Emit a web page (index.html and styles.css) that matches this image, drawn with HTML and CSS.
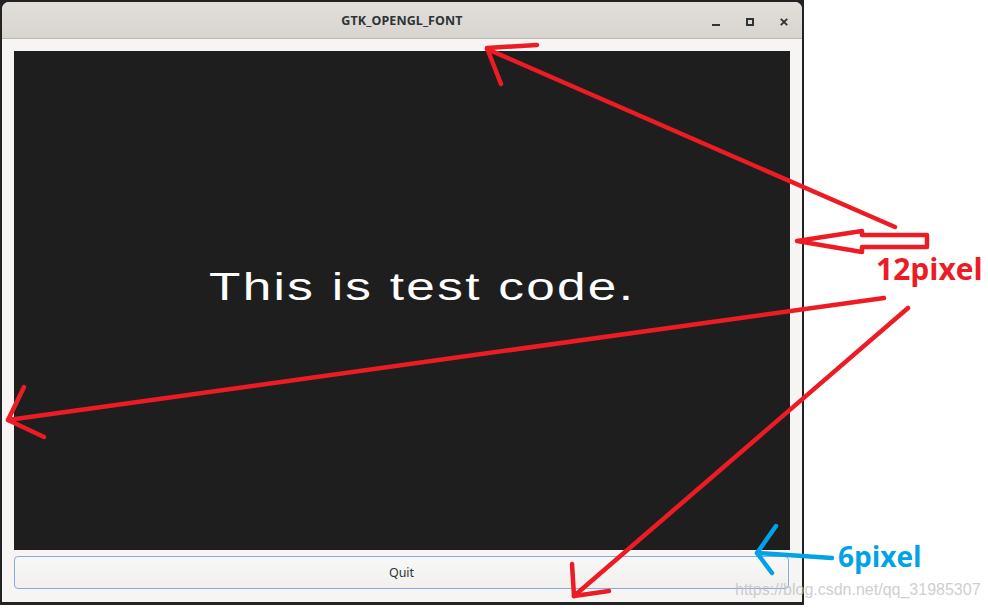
FILE: index.html
```html
<!DOCTYPE html>
<html>
<head>
<meta charset="utf-8">
<link rel="stylesheet" href="styles.css">
</head>
<body>
<div class="stage">
  <div class="desktop">
    <div class="window">
      <div class="titlebar">
        <div class="title">GTK_OPENGL_FONT</div>
        <div class="controls">
          <span class="ctl ctl-min"></span>
          <span class="ctl ctl-max"></span>
          <span class="ctl ctl-close">
            <svg width="8" height="8" viewBox="0 0 8 8"><path d="M0.8 0.8L7.2 7.2M7.2 0.8L0.8 7.2" stroke="#2e3436" stroke-width="1.9" fill="none"/></svg>
          </span>
        </div>
      </div>
      <div class="content">
        <div class="gl"><span class="gl-text">This is test code.</span></div>
        <div class="quit">Quit</div>
      </div>
    </div>
  </div>

  <svg class="marks" width="988" height="610" viewBox="0 0 988 610">
    <g class="red">
      <path d="M895 227L487 49"/>
      <path d="M537 45L487 48L501 84"/>
      <path d="M797 241L862 231L862 235L927 235L927 247L862 247L862 252Z"/>
      <path d="M884 298L8 420"/>
      <path d="M24 387L8 420L44 437"/>
      <path d="M908 308L574 596"/>
      <path d="M572 564L574 596L609 591"/>
    </g>
    <g class="blue">
      <path d="M832 558L757 553"/>
      <path d="M776 526L757 553L772 573"/>
    </g>
  </svg>
  <div class="note note-red">12pixel</div>
  <div class="note note-blue">6pixel</div>
  <div class="watermark">https://blog.csdn.net/qq_31985307</div>
</div>
</body>
</html>
```
FILE: styles.css
```css
html, body {
  margin: 0;
  padding: 0;
  background: #ffffff;
}
.stage {
  position: relative;
  width: 988px;
  height: 610px;
  overflow: hidden;
}
.desktop {
  width: 804px;
  height: 605px;
  box-sizing: border-box;
  padding: 2px 2px 3px 2px;
  background: #232323;
}
.window {
  width: 800px;
  height: 600px;
  display: flex;
  flex-direction: column;
  border-radius: 7px 7px 0 0;
  overflow: hidden;
  background: #f6f5f4;
}
.titlebar {
  position: relative;
  height: 36px;
  flex: none;
  border-bottom: 1px solid #bfb8b1;
  background: linear-gradient(#e2dfdb, #d8d4cf);
  display: flex;
  align-items: center;
  justify-content: center;
}
.title {
  font-family: "Noto Sans", "DejaVu Sans", sans-serif;
  font-weight: 700;
  font-size: 12.5px;
  color: #2e3436;
  letter-spacing: 0.1px;
}
.controls {
  position: absolute;
  right: 14px;
  top: 14px;
  display: flex;
  gap: 26px;
  align-items: flex-start;
}
.ctl {
  display: block;
  width: 8px;
  height: 8px;
  box-sizing: border-box;
}
.ctl-min {
  border-bottom: 2px solid #2e3436;
  height: 10px;
}
.ctl-max {
  border: 2px solid #2e3436;
  margin-top: 2px;
}
.ctl-close {
  margin-top: 2px;
}
.ctl-close svg {
  display: block;
}
.content {
  flex: 1;
  display: flex;
  flex-direction: column;
  gap: 6px;
  padding: 12px 12px 13px 12px;
}
.gl {
  height: 499px;
  flex: none;
  background: #1e1e1e;
  box-sizing: border-box;
  padding: 217px 0 0 195px;
}
.gl-text {
  display: inline-block;
  font-family: "Liberation Sans", Arial, sans-serif;
  font-size: 38px;
  line-height: 38px;
  letter-spacing: 1.7px;
  color: #ffffff;
  transform: scaleX(1.35);
  transform-origin: left center;
  white-space: nowrap;
}
.quit {
  height: 33px;
  box-sizing: border-box;
  width: 775px;
  border: 1px solid #83ace0;
  border-radius: 4px;
  background: linear-gradient(#f8f8f7, #f1f0ef);
  display: flex;
  align-items: center;
  justify-content: center;
  font-family: "Noto Sans", "DejaVu Sans", sans-serif;
  font-size: 12.5px;
  color: #2e3436;
}
.marks {
  position: absolute;
  left: 0;
  top: 0;
  pointer-events: none;
}
.marks path {
  fill: none;
  stroke-width: 4.5;
  stroke-linecap: round;
  stroke-linejoin: round;
}
.marks .red path {
  stroke: #ed1c24;
}
.marks .blue path {
  stroke: #00a2e8;
}
.note {
  position: absolute;
  font-family: "Open Sans", "Noto Sans", sans-serif;
  font-weight: 700;
  line-height: 1;
  white-space: nowrap;
}
.note-red {
  left: 876px;
  top: 254px;
  font-size: 30px;
  color: #ed1c24;
}
.note-blue {
  left: 838px;
  top: 542px;
  font-size: 28px;
  color: #00a2e8;
}
.watermark {
  position: absolute;
  left: 735px;
  top: 582px;
  font-family: "Liberation Sans", Arial, sans-serif;
  font-size: 16px;
  line-height: 16px;
  color: rgba(190, 190, 190, 0.75);
  white-space: nowrap;
}
```
